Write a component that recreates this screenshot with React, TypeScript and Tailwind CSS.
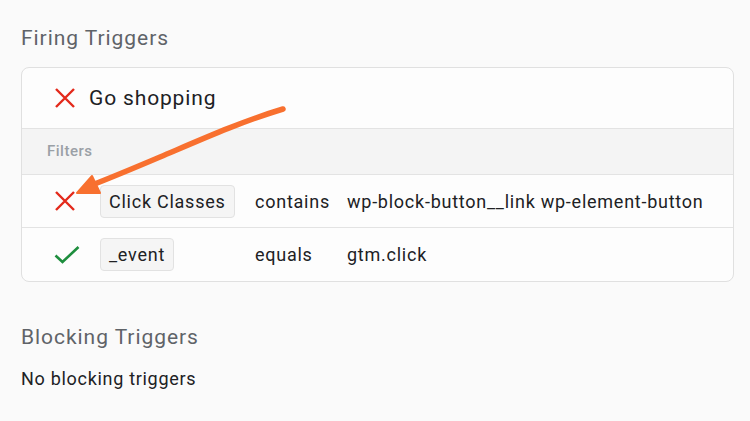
import React from "react";

const font = { fontFamily: "Roboto, 'Noto Sans', sans-serif" };

function CrossIcon() {
  return (
    <svg width="22" height="22" viewBox="0 0 22 22" className="shrink-0">
      <path d="M2 2L20 20M20 2L2 20" stroke="#e3291b" strokeWidth="2.4" strokeLinecap="butt" />
    </svg>
  );
}

function CheckIcon() {
  return (
    <svg width="26" height="20" viewBox="0 0 26 20" className="shrink-0">
      <path d="M1.5 10.5L8.5 17L24.5 2" stroke="#1e8e3e" strokeWidth="2.6" fill="none" />
    </svg>
  );
}

type Filter = {
  ok: boolean;
  variable: string;
  op: string;
  value: string;
};

const filters: Filter[] = [
  { ok: false, variable: "Click Classes", op: "contains", value: "wp-block-button__link wp-element-button" },
  { ok: true, variable: "_event", op: "equals", value: "gtm.click" },
];

function FilterRow({ f, last }: { f: Filter; last: boolean }) {
  return (
    <div className={`flex items-center h-[53px] text-[18px] tracking-[0.75px] text-[#202124] ${last ? "" : "border-b border-[#e3e3e3]"}`}>
      <div className="w-[78px] shrink-0 flex justify-start pl-[32px]">
        {f.ok ? <CheckIcon /> : <CrossIcon />}
      </div>
      <div className="w-[155px] shrink-0">
        <span className="inline-flex items-center h-[33px] px-[8px] rounded-[4px] border border-[#e2e2e2] bg-[#f5f5f5]">
          {f.variable}
        </span>
      </div>
      <div className="w-[92px] shrink-0">{f.op}</div>
      <div className="whitespace-nowrap">{f.value}</div>
    </div>
  );
}

export default function App() {
  return (
    <div className="relative w-[750px] h-[421px] bg-[#fafafa] overflow-hidden" style={font}>
      <div className="pl-[21px] pr-[16px] pt-[25px]">
        <h2 className="text-[21px] tracking-[0.95px] text-[#5f6368] leading-[26px]">Firing Triggers</h2>

        <div className="mt-[16px] rounded-[8px] border border-[#e0e0e0] bg-[#fdfdfd] overflow-hidden">
          <div className="flex items-center h-[61px] border-b border-[#e3e3e3] pl-[32px]">
            <CrossIcon />
            <span className="ml-[13px] mt-[2px] text-[21px] tracking-[0.85px] text-[#202124]">Go shopping</span>
          </div>

          <div className="flex items-center h-[46px] bg-[#f4f4f4] border-b border-[#e3e3e3] pl-[25px]">
            <span className="text-[15px] tracking-[0.5px] font-medium text-[#9aa0a6]">Filters</span>
          </div>

          {filters.map((f, i) => (
            <FilterRow key={f.variable} f={f} last={i === filters.length - 1} />
          ))}
        </div>

        <h2 className="mt-[42px] text-[21px] tracking-[0.95px] text-[#5f6368] leading-[26px]">Blocking Triggers</h2>
        <p className="mt-[15px] text-[18px] tracking-[0.7px] text-[#202124]">No blocking triggers</p>
      </div>

      {/* annotation arrow */}
      <svg className="absolute left-0 top-0 pointer-events-none" width="750" height="421">
        <path
          d="M283 109 C240 122 200 140 160 157 S110 178 92 185"
          stroke="#f8702f"
          strokeWidth="5.5"
          strokeLinecap="round"
          fill="none"
        />
        <path d="M77 193 L92 176 L100 193 Z" fill="#f8702f" stroke="#f8702f" strokeWidth="2" strokeLinejoin="round" />
      </svg>
    </div>
  );
}
